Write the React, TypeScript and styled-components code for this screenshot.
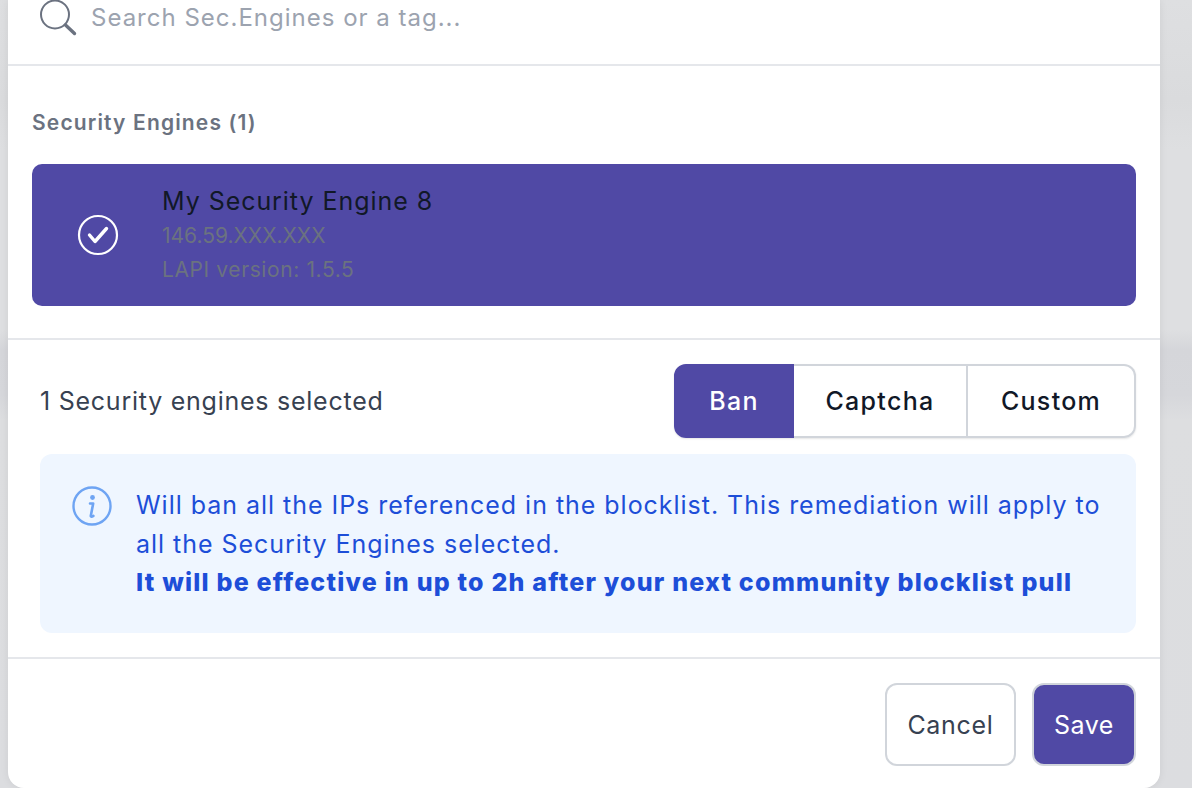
import React from 'react';
import styled, { createGlobalStyle } from 'styled-components';

const GlobalStyle = createGlobalStyle`
  html, body {
    margin: 0;
    height: 100%;
    overflow: hidden;
    background: #dcdddf;
  }

  * {
    box-sizing: border-box;
  }
`;

const Page = styled.div`
  width: 1192px;
  height: 788px;
  padding: 0 32px 0 8px;
  font-family: Inter, "Liberation Sans", sans-serif;
  background: linear-gradient(
    180deg,
    #dedfe1 0,
    #dadbdd 100px,
    #dedfe1 150px,
    #dedfe1 330px,
    #d5d6da 350px,
    #d6d7db 395px,
    #dddee0 420px,
    #dcdde0 100%
  );
  overflow: hidden;
`;

const Modal = styled.div`
  height: 788px;
  background: #fff;
  border-radius: 0 0 16px 16px;
  box-shadow: 0 0 8px rgba(0, 0, 0, 0.07);
  display: flex;
  flex-direction: column;
`;

const SearchRow = styled.div`
  height: 66px;
  flex: none;
  border-bottom: 2px solid #e5e7eb;
  display: flex;
  align-items: flex-start;
  gap: 13px;
  padding-left: 32px;
`;

const SearchIcon = styled.svg`
  width: 38px;
  height: 38px;
  flex: none;
`;

const SearchText = styled.span`
  font-size: 24px;
  line-height: 36px;
  color: #9ca3af;
  letter-spacing: 1px;
`;

const EnginesSection = styled.section`
  height: 274px;
  flex: none;
  padding: 45px 24px 0;
  border-bottom: 2px solid #e5e7eb;
`;

const SectionTitle = styled.h2`
  margin: 0 0 29px;
  font-size: 21px;
  line-height: 24px;
  font-weight: 600;
  letter-spacing: 1.15px;
  color: #6b7280;
`;

const EngineCard = styled.div`
  height: 142px;
  border-radius: 10px;
  background: #5049a5;
  display: flex;
  align-items: center;
  padding-left: 44px;
  gap: 42px;
`;

const CheckIcon = styled.svg`
  width: 44px;
  height: 44px;
  flex: none;
`;

const EngineName = styled.div`
  font-size: 25px;
  line-height: 34px;
  letter-spacing: 0.95px;
  margin-bottom: 1px;
  color: #111827;
`;

const EngineMeta = styled.div`
  font-size: 21px;
  line-height: 34px;
  color: #6b7280;
`;

const EngineVersion = styled(EngineMeta)`
  letter-spacing: 0.6px;
`;

const RemediationRow = styled.div`
  display: flex;
  align-items: center;
  justify-content: space-between;
  padding: 24px 24px 0 32px;
`;

const SelectedText = styled.span`
  font-size: 25px;
  letter-spacing: 0.75px;
  color: #374151;
`;

const ButtonGroup = styled.div`
  display: flex;
  height: 74px;
  border-radius: 12px;
  box-shadow: 0 1px 2px rgba(0, 0, 0, 0.1);
`;

const GroupButton = styled.button<{ $active?: boolean; $width: number }>`
  width: ${(p) => p.$width}px;
  font-family: inherit;
  font-size: 25px;
  font-weight: 500;
  letter-spacing: 1.3px;
  padding: 0;
  border: 2px solid ${(p) => (p.$active ? '#5049a5' : '#d1d5db')};
  border-left-width: ${(p) => (p.$active ? '2px' : '0')};
  background: ${(p) => (p.$active ? '#5049a5' : '#fff')};
  color: ${(p) => (p.$active ? '#fff' : '#111827')};

  &:first-child {
    border-radius: 12px 0 0 12px;
  }

  &:last-child {
    border-radius: 0 12px 12px 0;
  }
`;

const InfoBox = styled.div`
  margin: 16px 24px 0 32px;
  height: 179px;
  flex: none;
  border-radius: 12px;
  background: #eff6ff;
  display: flex;
  gap: 24px;
  padding: 32px 32px 0;
`;

const InfoIcon = styled.svg`
  width: 40px;
  height: 40px;
  flex: none;
`;

const InfoText = styled.div`
  font-size: 25px;
  line-height: 38.5px;
  letter-spacing: 0.97px;
  color: #1d4ed8;
  white-space: nowrap;

  strong {
    font-weight: 800;
    letter-spacing: 1.21px;
    display: block;
  }
`;

const Footer = styled.div`
  margin-top: 24px;
  border-top: 2px solid #e5e7eb;
  display: flex;
  justify-content: flex-end;
  gap: 16px;
  padding: 24px 24px 0;
`;

const FooterButton = styled.button<{ $primary?: boolean; $width: number }>`
  width: ${(p) => p.$width}px;
  height: 83px;
  border-radius: 12px;
  border: 2px solid #d1d5db;
  font-family: inherit;
  font-size: 25px;
  letter-spacing: ${(p) => (p.$primary ? '0.5px' : '0.7px')};
  padding: 0;
  background: ${(p) => (p.$primary ? '#5049a5' : '#fff')};
  color: ${(p) => (p.$primary ? '#fff' : '#374151')};
`;

export default function App() {
  return (
    <Page>
      <GlobalStyle />
      <Modal>
        <SearchRow>
          <SearchIcon viewBox="0 0 38 38" fill="none">
            <circle cx="15" cy="14.5" r="14" stroke="#6b7280" strokeWidth="2" />
            <path d="M25.5 25L34.5 33.5" stroke="#6b7280" strokeWidth="3.4" strokeLinecap="round" />
          </SearchIcon>
          <SearchText>Search Sec.Engines or a tag...</SearchText>
        </SearchRow>
        <EnginesSection>
          <SectionTitle>Security Engines (1)</SectionTitle>
          <EngineCard>
            <CheckIcon viewBox="0 0 44 44" fill="none">
              <circle cx="22" cy="22" r="19" stroke="#fff" strokeWidth="2.2" />
              <path d="M13.5 22l5.5 6.5L30.5 15.5" stroke="#fff" strokeWidth="3.4" strokeLinecap="round" strokeLinejoin="round" />
            </CheckIcon>
            <div>
              <EngineName>My Security Engine 8</EngineName>
              <EngineMeta>146.59.XXX.XXX</EngineMeta>
              <EngineVersion>LAPI version: 1.5.5</EngineVersion>
            </div>
          </EngineCard>
        </EnginesSection>
        <RemediationRow>
          <SelectedText>1 Security engines selected</SelectedText>
          <ButtonGroup>
            <GroupButton $active $width={120}>Ban</GroupButton>
            <GroupButton $width={174}>Captcha</GroupButton>
            <GroupButton $width={168}>Custom</GroupButton>
          </ButtonGroup>
        </RemediationRow>
        <InfoBox>
          <InfoIcon viewBox="0 0 40 40" fill="none">
            <circle cx="20" cy="20" r="18.5" stroke="#6ea4f3" strokeWidth="2.4" />
            <circle cx="20.5" cy="11.5" r="2.4" fill="#6ea4f3" />
            <path d="M18 17.5h3.2l-2.4 12.2c-.2 1 .8 1.3 2.6.2" stroke="#6ea4f3" strokeWidth="2.6" strokeLinecap="round" strokeLinejoin="round" />
          </InfoIcon>
          <InfoText>
            Will ban all the IPs referenced in the blocklist. This remediation will apply to
            <br />
            all the Security Engines selected.
            <strong>It will be effective in up to 2h after your next community blocklist pull</strong>
          </InfoText>
        </InfoBox>
        <Footer>
          <FooterButton $width={131}>Cancel</FooterButton>
          <FooterButton $primary $width={104}>Save</FooterButton>
        </Footer>
      </Modal>
    </Page>
  );
}
